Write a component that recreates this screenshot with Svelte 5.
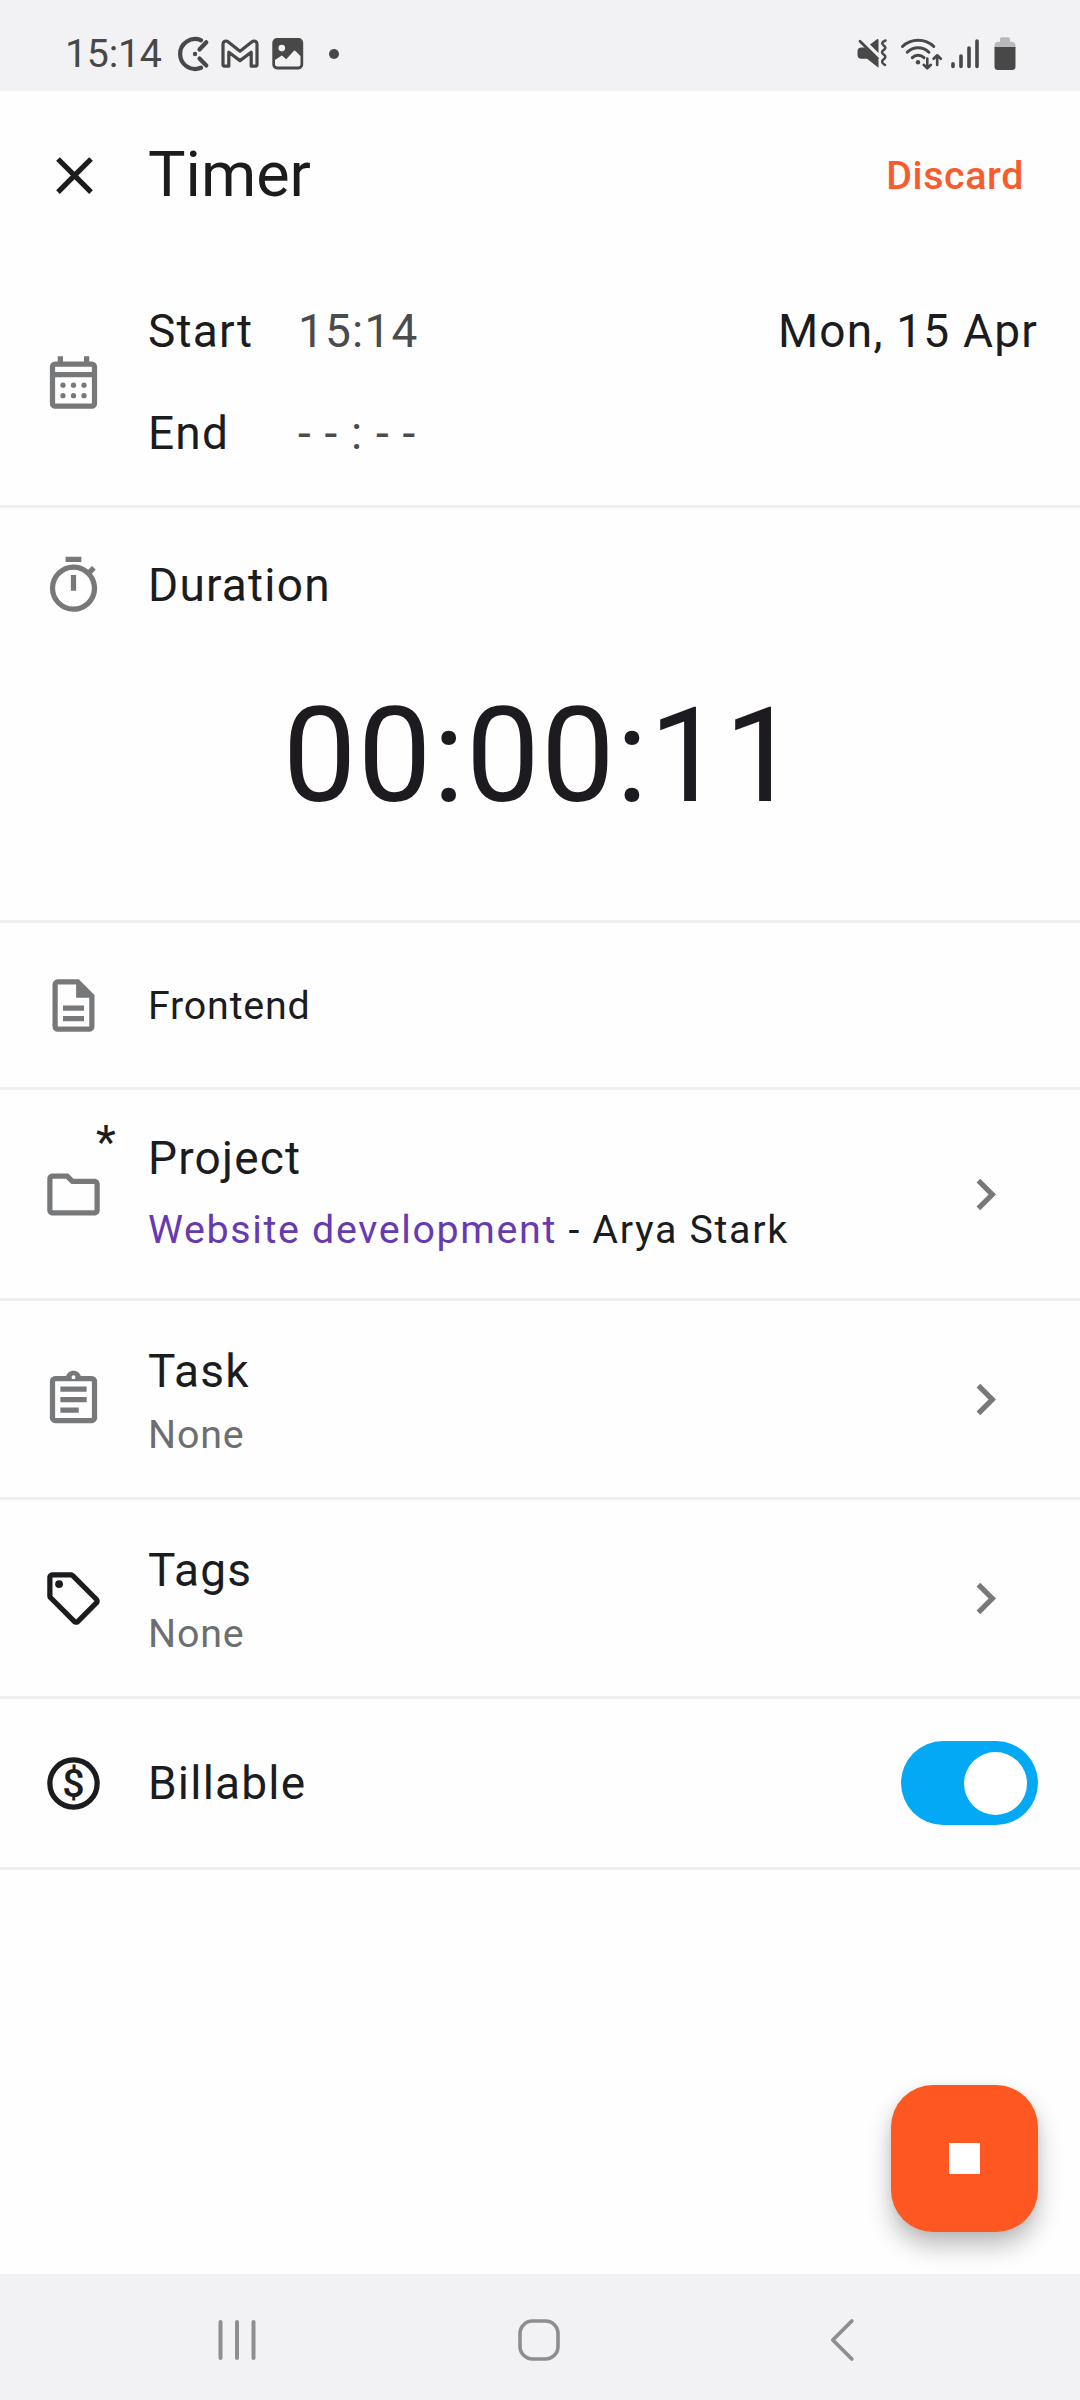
<script>
	let start = '15:14';
	let date = 'Mon, 15 Apr';
	let elapsed = '00:00:11';
	let description = 'Frontend';
	let project = { name: 'Website development', client: 'Arya Stark' };
	let billable = true;
</script>

{#snippet chevron()}
	<svg class="icon chevron" viewBox="0 0 24 24">
		<path d="M8.59 16.59 13.17 12 8.59 7.41 10 6l6 6-6 6z" />
	</svg>
{/snippet}

<div class="screen">
	<div class="status">
		<span class="clock">15:14</span>
		<svg class="s-clockify" width="32" height="36" viewBox="0 0 32 36">
			<path d="M23 4.2A15 15 0 1 0 23 31.8" class="line" stroke-width="4.2" />
			<path d="M21.5 13.5 28.3 6.2M21.5 22.5l6.8 7" class="line" stroke-width="4.2" />
			<circle cx="17" cy="18" r="2.2" />
		</svg>
		<svg class="s-mail" width="38" height="30" viewBox="0 0 38 30">
			<path
				d="M7.8 27.2H3.6A1.6 1.6 0 0 1 2 25.6V5c0-2.6 3-3.8 5-2.2l12 9.4 12-9.4c2-1.6 5-.4 5 2.2v20.6a1.6 1.6 0 0 1-1.6 1.6h-4.2v-14L19 21.6 7.8 13.2z"
				class="line"
				stroke-width="3.2"
			/>
		</svg>
		<svg class="s-image" width="32" height="32" viewBox="0 0 32 32">
			<path
				fill-rule="evenodd"
				d="M5 0h21.5a4.7 4.7 0 0 1 4.7 4.7v22a4.7 4.7 0 0 1-4.7 4.7H5a4.7 4.7 0 0 1-4.700-4.700v-22A4.7 4.7 0 0 1 5 0zM9.8 6.8a3.3 3.3 0 1 0 0 6.6 3.3 3.3 0 0 0 0-6.600zM3 22v4c0 1.700.8 2.400 2.400 2.400h20.700c1.600 0 2.400-.7 2.400-2.400v-8l-5-5a1.200 1.200 0 0 0-1.700 0l-7.600 8.300-3.600-3.400a1.200 1.200 0 0 0-1.600 0z"
			/>
		</svg>
		<span class="dot"></span>

		<svg class="s-mute" width="30" height="32" viewBox="0 0 30 32">
			<path d="M4.5 9.5h3.2l13.800 13v7.200L10 20.800H4.500a4 4 0 0 1-4-4v-3.300a4 4 0 0 1 4-4zM13 6.500l7-5.200c.8-.5 1.500-.2 1.500.7v13z" />
			<path d="M3 3.2 20.5 20.5" class="line" stroke-width="2.8" />
			<path d="M28.5 2.5c-4 1.500-4 3.300-1.800 4.900 2.200 1.600 2.200 3 0 4.600s-2.200 3 0 4.600 2.200 3 0 4.600-2.200 4.300 1.300 5.800" class="line" stroke-width="2.5" />
		</svg>
		<svg class="s-wifi" width="43" height="34" viewBox="0 0 43 34">
			<path d="M2.5 9.5c8.500-8.400 22.800-8.400 31.300 0M7.300 15.200c6-6 15.600-6 21.600 0M12.300 20.600c3.200-3.300 8.400-3.300 11.700 0" class="line" stroke-width="3" />
			<circle cx="18" cy="25.2" r="2.2" />
			<path d="M27.3 21.5V31M23.7 27.800l3.600 3.500 3.600-3.500M37.200 28v-9M33.600 21.800l3.600-3.500 3.600 3.500" class="line" stroke-width="2.6" />
		</svg>
		<svg class="s-signal" width="28" height="30" viewBox="0 0 28 30">
			<path d="M2 24.700v2.800M10 17v10.500M18 9v18.500M26 2v25.500" class="line" stroke-width="3.6" />
		</svg>
		<svg class="s-battery" width="22" height="34" viewBox="0 0 22 34">
			<path d="M6 2.200C6 1 6.700.3 7.900.3h6.200c1.200 0 1.900.7 1.900 1.900v2.600h1.500a4 4 0 0 1 4 4V11H.5V8.800a4 4 0 0 1 4-4H6z" fill="#b9b9bb" />
			<path d="M.5 10h21v19.500a3.500 3.500 0 0 1-3.500 3.500H4a3.500 3.500 0 0 1-3.500-3.500z" />
		</svg>
	</div>

	<header>
		<svg class="icon dark close" viewBox="0 0 24 24">
			<path d="M19 6.41 17.59 5 12 10.59 6.41 5 5 6.41 10.59 12 5 17.59 6.41 19 12 13.41 17.59 19 19 17.59 13.41 12z" />
		</svg>
		<h1>Timer</h1>
		<button class="discard">Discard</button>
	</header>

	<section class="times">
		<svg class="icon" viewBox="0 0 24 24">
			<path
				fill-rule="evenodd"
				d="M6 2h2v2h8V2h2v2h1a2 2 0 0 1 2 2v14a2 2 0 0 1-2 2H5a2 2 0 0 1-2-2V6a2 2 0 0 1 2-2h1zM5 6v2h14V6zM5 10v10h14V10z"
			/>
			<circle cx="8" cy="13" r="1" /><circle cx="12" cy="13" r="1" /><circle cx="16" cy="13" r="1" />
			<circle cx="8" cy="17" r="1" /><circle cx="12" cy="17" r="1" /><circle cx="16" cy="17" r="1" />
		</svg>
		<div class="text">
			<div class="time-row">
				<span class="label">Start</span>
				<span class="value">{start}</span>
				<span class="date">{date}</span>
			</div>
			<div class="time-row">
				<span class="label">End</span>
				<span class="value">- - : - -</span>
			</div>
		</div>
	</section>

	<section class="duration">
		<div class="duration-head">
			<svg class="icon" viewBox="0 0 24 24">
				<path d="M15 1H9v2h6V1zm-4 13h2V8h-2v6zm8.03-6.61 1.42-1.42c-.43-.51-.9-.99-1.41-1.41l-1.42 1.42A8.962 8.962 0 0 0 12 4a9 9 0 0 0 0 18c4.98 0 9-4.03 9-9a8.994 8.994 0 0 0-1.97-5.61zM12 20c-3.87 0-7-3.13-7-7s3.13-7 7-7 7 3.13 7 7-3.13 7-7 7z" />
			</svg>
			<span class="label">Duration</span>
		</div>
		<div class="elapsed">{elapsed}</div>
	</section>

	<section class="description">
		<svg class="icon" viewBox="0 0 24 24">
			<path fill-rule="evenodd" d="M6 2h8l6 6v12a2 2 0 0 1-2 2H6a2 2 0 0 1-2-2V4a2 2 0 0 1 2-2zM6 4v16h12V9h-5V4z" />
			<path d="M8 12h8v2H8zM8 16h8v2H8z" />
		</svg>
		<span class="sub dark-text">{description}</span>
	</section>

	<section class="project">
		<svg class="icon" viewBox="0 0 24 24">
			<path d="M9.17 6l2 2H20v10H4V6h5.17M10 4H4c-1.1 0-1.99.9-1.99 2L2 18c0 1.1.9 2 2 2h16c1.1 0 2-.9 2-2V8c0-1.1-.9-2-2-2h-8l-2-2z" />
		</svg>
		<span class="required">*</span>
		<div class="text">
			<div class="label">Project</div>
			<div class="sub dark-text"><span class="project-name">{project.name}</span> - {project.client}</div>
		</div>
		{@render chevron()}
	</section>

	<section class="picker">
		<svg class="icon" viewBox="0 0 24 24">
			<path d="M7 15h7v2H7zM7 11h10v2H7zM7 7h10v2H7z" />
			<path
				fill-rule="evenodd"
				d="M19 3h-4.18C14.4 1.84 13.3 1 12 1s-2.400.84-2.820 2H5a2 2 0 0 0-2 2v14a2 2 0 0 0 2 2h14a2 2 0 0 0 2-2V5a2 2 0 0 0-2-2zM12 2.750a.75.75 0 1 1 0 1.500.75.75 0 0 1 0-1.500zM19 19H5V5h14z"
			/>
		</svg>
		<div class="text">
			<div class="label">Task</div>
			<div class="sub">None</div>
		</div>
		{@render chevron()}
	</section>

	<section class="picker">
		<svg class="icon dark" viewBox="0 0 24 24">
			<path d="M21.41 11.58l-9-9C12.05 2.22 11.55 2 11 2H4c-1.1 0-2 .9-2 2v7c0 .55.22 1.05.59 1.42l9 9c.36.36.86.58 1.41.58s1.05-.22 1.41-.59l7-7c.37-.36.59-.86.59-1.41s-.23-1.06-.59-1.42zM13 20.01L4 11V4h7v-.01l9 9-7 7.02z" />
			<circle cx="6.5" cy="6.5" r="1.5" />
		</svg>
		<div class="text">
			<div class="label">Tags</div>
			<div class="sub">None</div>
		</div>
		{@render chevron()}
	</section>

	<section class="billable">
		<svg class="icon dark" viewBox="0 0 24 24">
			<circle cx="12" cy="12" r="9" fill="none" stroke="currentColor" stroke-width="2" />
			<text x="12" y="17.2" text-anchor="middle" class="dollar">$</text>
		</svg>
		<span class="label">Billable</span>
		<button class="toggle" class:on={billable} aria-label="Billable" on:click={() => (billable = !billable)}>
			<span class="knob"></span>
		</button>
	</section>

	<div class="actions">
		<button class="stop" aria-label="Stop timer"><span></span></button>
	</div>

	<nav>
		<svg width="40" height="44" viewBox="0 0 40 44">
			<path d="M3.5 4v36M20 4v36M36.5 4v36" class="line" stroke-width="4" />
		</svg>
		<svg class="home" width="44" height="44" viewBox="0 0 44 44">
			<rect x="3" y="3" width="38" height="38" rx="12.5" class="line" stroke-width="3.6" />
		</svg>
		<svg class="back" width="26" height="44" viewBox="0 0 26 44">
			<path d="M22.800 3 3.800 22l19 19" class="line" stroke-width="3.8" />
		</svg>
	</nav>
</div>

<style>
	:global(body) {
		background: #fefefe;
	}

	.screen {
		width: 1080px;
		height: 2400px;
		display: flex;
		flex-direction: column;
		overflow: hidden;
		background: #fefefe;
		color: #1b1c1e;
		font-family: Roboto, sans-serif;
	}

	svg {
		display: block;
		flex: none;
		fill: currentColor;
	}

	.line {
		fill: none;
		stroke: currentColor;
		stroke-linecap: round;
		stroke-linejoin: round;
	}

	button {
		border: none;
		padding: 0;
		background: none;
		font-family: inherit;
		cursor: pointer;
	}

	/* Status bar */
	.status {
		height: 91px;
		flex: none;
		box-sizing: border-box;
		padding: 17px 64px 0 65px;
		display: flex;
		align-items: center;
		background: #f2f2f5;
		color: #484848;
	}

	.clock {
		width: 113px;
		font-size: 39.4px;
		line-height: 72px;
		letter-spacing: -0.3px;
	}

	.s-mail {
		margin-left: 11px;
	}

	.s-image {
		margin-left: 13px;
	}

	.dot {
		width: 10px;
		height: 10px;
		margin-left: 25px;
		border-radius: 50%;
		background: #484848;
	}

	.s-mute {
		margin-left: auto;
	}

	.s-wifi {
		margin-left: 13px;
	}

	.s-signal {
		margin-left: 8px;
	}

	.s-battery {
		margin-left: 15px;
	}

	/* Header */
	header {
		height: 168px;
		flex: none;
		display: flex;
		align-items: center;
		padding: 0 56px 0 43px;
	}

	h1 {
		margin: 0 0 0 42px;
		font-size: 63px;
		font-weight: 400;
		line-height: 72px;
	}

	.discard {
		margin: 2px 0 0 auto;
		color: #f95b2c;
		font-size: 39.4px;
		font-weight: 500;
		line-height: 48px;
		letter-spacing: 0.6px;
	}

	/* Rows */
	section {
		flex: none;
		display: flex;
		align-items: center;
		position: relative;
		padding: 0 42px;
		border-bottom: 3px solid #efefef;
	}

	.icon {
		width: 63px;
		height: 63px;
		color: #77787a;
	}

	.icon.dark {
		color: #1b1c1e;
	}

	.text {
		flex: 1;
	}

	section > .icon:first-child,
	.duration-head .icon {
		margin-right: 43px;
	}

	.label {
		font-size: 46px;
		letter-spacing: 1.2px;
	}

	.sub {
		color: #6d6e70;
		font-size: 39.4px;
		letter-spacing: 0.8px;
	}

	.dark-text {
		color: #1b1c1e;
	}

	.times {
		height: 246px;
	}

	.time-row {
		display: flex;
		height: 102px;
		line-height: 103px;
		font-size: 46px;
		letter-spacing: 1.2px;
	}

	.time-row .label {
		width: 150px;
	}

	.value {
		color: #4b4b4d;
	}

	.date {
		margin-left: auto;
	}

	.duration {
		height: 412px;
		flex-direction: column;
		align-items: stretch;
	}

	.duration-head {
		display: flex;
		align-items: center;
		height: 154px;
	}

	.elapsed {
		padding-left: 2px;
		color: #1d1b20;
		font-size: 131.25px;
		line-height: 188px;
		letter-spacing: 1.3px;
		text-align: center;
	}

	.description {
		height: 164px;
	}

	.project {
		height: 208px;
	}

	.project .text {
		line-height: 71px;
	}

	.project .sub {
		letter-spacing: 1.65px;
	}

	.required {
		position: absolute;
		left: 96px;
		top: 24px;
		font-size: 46px;
		line-height: 56px;
	}

	.project-name {
		color: #673ab0;
	}

	.picker {
		height: 196px;
	}

	.picker .text {
		padding-top: 7px;
		line-height: 64px;
	}

	.chevron {
		margin-right: 21px;
	}

	.billable {
		height: 168px;
	}

	.dollar {
		font-size: 15px;
		font-weight: 500;
	}

	.toggle {
		width: 137px;
		height: 84px;
		box-sizing: border-box;
		margin-left: auto;
		padding: 0 11px;
		display: flex;
		align-items: center;
		border-radius: 42px;
		background: #b0b0b0;
	}

	.toggle.on {
		justify-content: flex-end;
		background: #03a9f4;
	}

	.knob {
		width: 63px;
		height: 63px;
		border-radius: 50%;
		background: #fff;
	}

	/* Stop button */
	.actions {
		flex: 1;
		display: flex;
		justify-content: flex-end;
		align-items: flex-end;
		padding: 0 42px 42px;
	}

	.stop {
		width: 147px;
		height: 147px;
		display: flex;
		align-items: center;
		justify-content: center;
		border-radius: 42px;
		background: #ff5722;
		box-shadow: 0 14px 24px rgba(0, 0, 0, 0.26), 0 2px 10px rgba(0, 0, 0, 0.06);
	}

	.stop span {
		width: 31.5px;
		height: 31.5px;
		background: #fff;
	}

	/* Navigation bar */
	nav {
		height: 126px;
		flex: none;
		box-sizing: border-box;
		display: flex;
		align-items: center;
		padding: 6px 0 0 217px;
		background: #f2f2f5;
		color: #8e8e90;
	}

	.home {
		margin-left: 260px;
	}

	.back {
		margin-left: 268px;
	}
</style>
